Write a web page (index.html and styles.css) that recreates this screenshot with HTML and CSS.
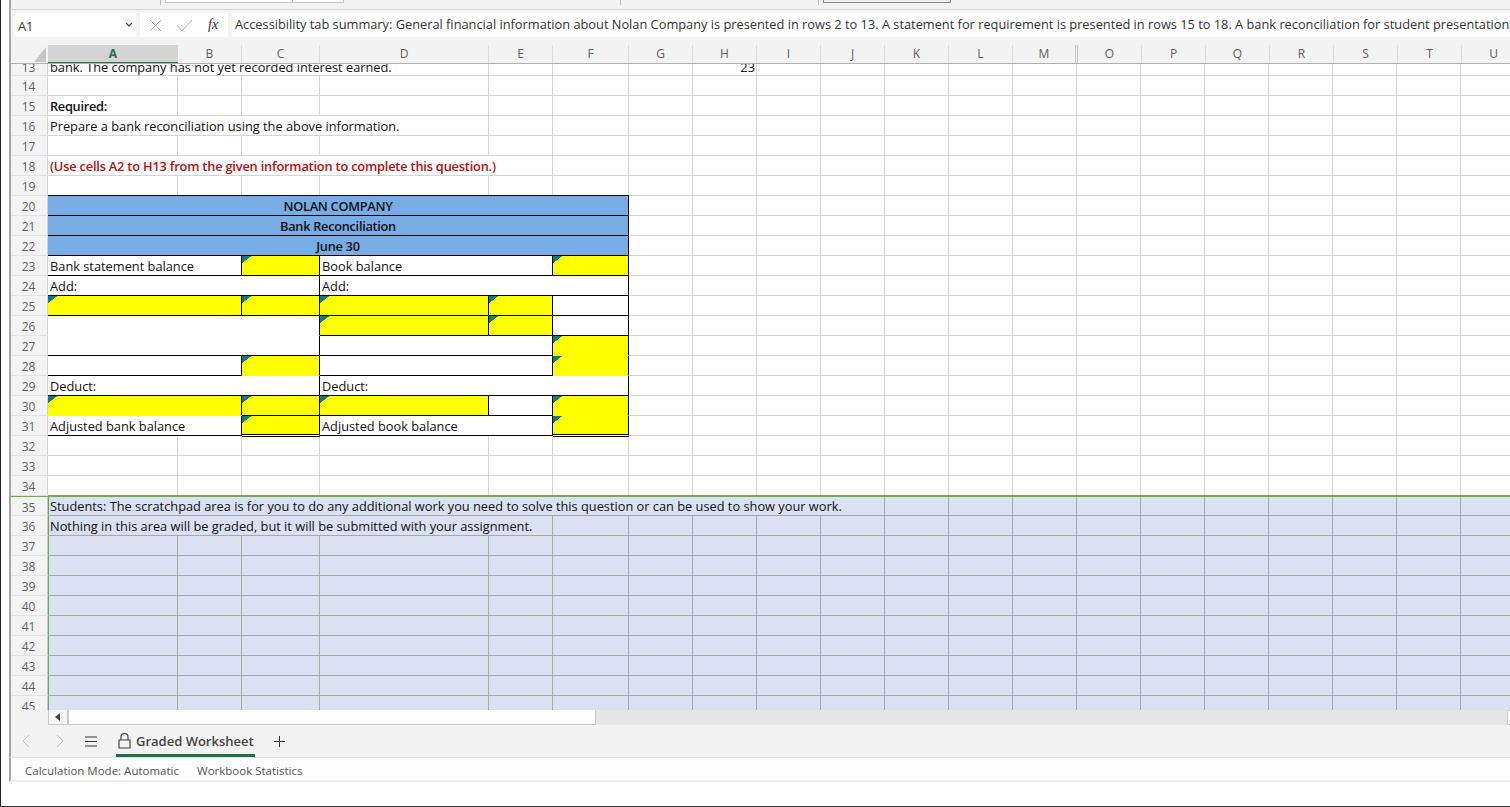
FILE: index.html
```html
<!DOCTYPE html>
<html lang="en">
<head>
<meta charset="utf-8">
<title>Graded Worksheet</title>
<link rel="stylesheet" href="styles.css">
</head>
<body>
<div class="app">
  <div class="topstrip">
    <div class="tick t1"></div>
    <div class="stripbox b1"><span class="s1"></span></div>
    <div class="tick t2"></div>
    <div class="tick t3"></div>
    <div class="stripbox b3"></div>
  </div>
  <div class="formula">
    <div class="namebox"><span class="nametext">A1</span><svg width="8" height="6" viewBox="0 0 8 6"><path d="M1 1l3 3 3-3" fill="none" stroke="#444" stroke-width="1.2"/></svg></div>
    <div class="fbtns">
      <svg width="13" height="13" viewBox="0 0 13 13"><path d="M1 1l11 11M12 1L1 12" fill="none" stroke="#aaa" stroke-width="1"/></svg>
      <svg width="17" height="13" viewBox="0 0 17 13"><path d="M1 6l5 6L16 1" fill="none" stroke="#b4b4b4" stroke-width="1"/></svg>
      <span class="fx">fx</span>
    </div>
    <div class="finput">Accessibility tab summary: General financial information about Nolan Company is presented in rows 2 to 13. A statement for requirement is presented in rows 15 to 18. A bank reconciliation for student presentation is presented in rows 20 to 31.</div>
  </div>
  <div class="colhead">
    <div class="corner"><span class="tri"></span></div>
    <div class="ch sel">A</div><div class="ch">B</div><div class="ch">C</div><div class="ch">D</div><div class="ch">E</div><div class="ch">F</div>
    <div class="ch">G</div><div class="ch">H</div><div class="ch">I</div><div class="ch">J</div><div class="ch">K</div><div class="ch">L</div><div class="ch mm">M</div><div class="ch">O</div><div class="ch">P</div><div class="ch">Q</div><div class="ch">R</div><div class="ch">S</div><div class="ch">T</div><div class="ch">U</div>
  </div>
  <div class="sheet">
    <div class="row first"><div class="num">13</div><div class="c s-ad plain">bank. The company has not yet recorded interest earned.</div><div class="c-g"><span class="h13">23</span></div></div>
    <div class="row"><div class="num">14</div><div class="tail"></div></div>
    <div class="row"><div class="num">15</div><div class="c s-a plain bold">Required:</div><div class="tail"></div></div>
    <div class="row"><div class="num">16</div><div class="c s-ad plain">Prepare a bank reconciliation using the above information.</div><div class="tail"></div></div>
    <div class="row"><div class="num">17</div><div class="tail"></div></div>
    <div class="row"><div class="num">18</div><div class="c s-ae plain bold red">(Use cells A2 to H13 from the given information to complete this question.)</div><div class="tail"></div></div>
    <div class="row"><div class="num">19</div><div class="tail"></div></div>
    <div class="row"><div class="num">20</div><div class="c s-af blue bold center t">NOLAN COMPANY</div><div class="tail"></div></div>
    <div class="row"><div class="num">21</div><div class="c s-af blue bold center">Bank Reconciliation</div><div class="tail"></div></div>
    <div class="row"><div class="num">22</div><div class="c s-af blue bold center">June 30</div><div class="tail"></div></div>
    <div class="row"><div class="num">23</div><div class="c s-ab w">Bank statement balance</div><div class="c s-c y"></div><div class="c s-de w">Book balance</div><div class="c s-f y"></div><div class="tail"></div></div>
    <div class="row"><div class="num">24</div><div class="c s-ac w">Add:</div><div class="c s-df w">Add:</div><div class="tail"></div></div>
    <div class="row"><div class="num">25</div><div class="c s-ab y"></div><div class="c s-c y"></div><div class="c s-d y"></div><div class="c s-e y"></div><div class="c s-f w"></div><div class="tail"></div></div>
    <div class="row"><div class="num">26</div><div class="c s-ac w nb"></div><div class="c s-d y"></div><div class="c s-e y"></div><div class="c s-f w"></div><div class="tail"></div></div>
    <div class="row"><div class="num">27</div><div class="c s-ac w"></div><div class="c s-de w"></div><div class="c s-f y open"></div><div class="tail"></div></div>
    <div class="row"><div class="num">28</div><div class="c s-ab w"></div><div class="c s-c y open"></div><div class="c s-de w"></div><div class="c s-f y open"></div><div class="tail"></div></div>
    <div class="row"><div class="num">29</div><div class="c s-ac w">Deduct:</div><div class="c s-df w">Deduct:</div><div class="tail"></div></div>
    <div class="row"><div class="num">30</div><div class="c s-ab y open"></div><div class="c s-c y"></div><div class="c s-d y"></div><div class="c s-e w"></div><div class="c s-f y open"></div><div class="tail"></div></div>
    <div class="row"><div class="num">31</div><div class="c s-ab w">Adjusted bank balance</div><div class="c s-c y dbl"></div><div class="c s-de w">Adjusted book balance</div><div class="c s-f y dbl"></div><div class="tail"></div></div>
    <div class="row"><div class="num">32</div><div class="tail"></div></div>
    <div class="row"><div class="num">33</div><div class="tail"></div></div>
    <div class="row r34"><div class="num">34</div><div class="tail"></div></div>
    <div class="row scratch r35"><div class="num">35</div><div class="c s-ah note">Students: The scratchpad area is for you to do any additional work you need to solve this question or can be used to show your work.</div><div class="tail"></div></div>
    <div class="row scratch"><div class="num">36</div><div class="c s-ae note">Nothing in this area will be graded, but it will be submitted with your assignment.</div><div class="tail"></div></div>
    <div class="row scratch"><div class="num">37</div><div class="tail"></div></div>
    <div class="row scratch"><div class="num">38</div><div class="tail"></div></div>
    <div class="row scratch"><div class="num">39</div><div class="tail"></div></div>
    <div class="row scratch"><div class="num">40</div><div class="tail"></div></div>
    <div class="row scratch"><div class="num">41</div><div class="tail"></div></div>
    <div class="row scratch"><div class="num">42</div><div class="tail"></div></div>
    <div class="row scratch"><div class="num">43</div><div class="tail"></div></div>
    <div class="row scratch"><div class="num">44</div><div class="tail"></div></div>
    <div class="row scratch"><div class="num">45</div><div class="tail"></div></div>
  </div>
  <div class="hscroll">
    <div class="hs-left"></div>
    <div class="hs-btn"><svg width="6" height="8" viewBox="0 0 6 8"><path d="M5 0v8L0 4z" fill="#444"/></svg></div>
    <div class="hs-thumb"></div>
    <div class="hs-track"></div>
    <div class="hs-end"></div>
  </div>
  <div class="tabs">
    <svg class="nav" width="10" height="14" viewBox="0 0 10 14"><path d="M8 1L2 7l6 6" fill="none" stroke="#c4c4c4" stroke-width="1"/></svg>
    <svg class="nav n2" width="10" height="14" viewBox="0 0 10 14"><path d="M2 1l6 6-6 6" fill="none" stroke="#bdbdbd" stroke-width="1"/></svg>
    <svg class="menu" width="12" height="11" viewBox="0 0 12 11"><path d="M0 1h12M0 5.500h12M0 10h12" fill="none" stroke="#333" stroke-width="1"/></svg>
    <div class="tab">
      <svg width="13" height="16" viewBox="0 0 13 16"><path d="M1 7V15H12V7ZM3 7V4a3.500 3.500 0 0 1 7 0V7" fill="none" stroke="#444" stroke-width="1.200"/></svg>
      <span>Graded Worksheet</span>
    </div>
    <svg class="plus" width="13" height="13" viewBox="0 0 13 13"><path d="M6.500 1v11M1 6.500h11" fill="none" stroke="#333" stroke-width="1"/></svg>
  </div>
  <div class="status"><span>Calculation Mode: Automatic</span><span>Workbook Statistics</span></div>
</div>
</body>
</html>
```
FILE: styles.css
```css
* { box-sizing: border-box; }
html, body { margin: 0; padding: 0; background: #fff; }
body { font-family: "Open Sans", "Liberation Sans", sans-serif; overflow: hidden; }
.app { width: 1510px; height: 807px; border-left: 1px solid #222; border-bottom: 1px solid #333; padding-left: 8px; overflow: hidden; }
.topstrip { height: 10px; background: #f3f2f1; border-bottom: 1px solid #d2d2d2; border-left: 2px solid #a6a6a6; display: flex; align-items: flex-start; overflow: hidden; }
.stripbox { height: 3px; background: #fff; border: 1px solid #c8c8c8; border-top: 0; flex: none; }
.tick { width: 1px; height: 5px; background: #bbb; flex: none; }
.t1 { margin-left: 149px; }
.b1 { margin-left: 4px; width: 179px; height: 3px; display: flex; }
.s1 { width: 127px; border-right: 1px solid #c8c8c8; }
.t2 { margin-left: 276px; }
.t3 { margin-left: 197px; }
.b3 { margin-left: 4px; width: 128px; border-color: #888; background: transparent; }
.formula { height: 35px; background: #f3f3f3; display: flex; padding: 3px 0 8px 4px; gap: 4px; border-left: 2px solid #a6a6a6; }
.namebox { width: 121px; background: #fff; display: flex; align-items: center; justify-content: space-between; padding: 0 3px; font-size: 12.800px; color: #333; }
.nametext { padding-top: 2px; }
.fbtns { width: 88px; background: #fff; display: flex; align-items: center; gap: 14px; padding-left: 9px; }
.fx { font: italic 14px "Liberation Serif", serif; color: #333; margin-left: 1px; }
.finput { flex: 1; background: #fff; font-size: 12.800px; line-height: 22px; padding: 0 3px; white-space: nowrap; overflow: hidden; color: #333; }
.colhead { height: 19px; background: #f3f3f3; display: flex; border-bottom: 1px solid #b0b0b0; border-left: 2px solid #a6a6a6; font-size: 12px; color: #5f5f5f; overflow: hidden; }
.corner { width: 37px; flex: none; position: relative; }
.tri { position: absolute; right: 2px; bottom: 1px; border-style: solid; border-width: 0 0 15px 12px; border-color: transparent transparent #c6c6c6 transparent; }
.ch { width: 64px; flex: none; text-align: center; line-height: 18px; border-right: 1px solid #dcdcdc; }
.ch:nth-child(2) { width: 130px; }
.ch:nth-child(4) { width: 78px; }
.ch:nth-child(5) { width: 169px; }
.ch:nth-child(7) { width: 76px; }
.ch.sel { background: #d4d4d4; color: #217346; font-weight: 700; height: 19px; border-right: 0; border-bottom: 2px solid #217346; }
.ch.mm { border-right: 3px double #c8c8c8; width: 65px; }
.sheet { height: 646px; overflow: hidden; border-left: 2px solid #a6a6a6; }
.row { --line: #d4d4d4; height: 20px; display: grid; grid-template-columns: 37px 130px 64px 78px 169px 64px 76px 1fr; grid-template-rows: minmax(0, 1fr); border-bottom: 1px solid var(--line); font-size: 12.800px; color: #111;
  background:
    linear-gradient(var(--line), var(--line)) 166px 0 / 1px 100% no-repeat,
    linear-gradient(var(--line), var(--line)) 230px 0 / 1px 100% no-repeat,
    linear-gradient(var(--line), var(--line)) 308px 0 / 1px 100% no-repeat,
    linear-gradient(var(--line), var(--line)) 477px 0 / 1px 100% no-repeat,
    linear-gradient(var(--line), var(--line)) 541px 0 / 1px 100% no-repeat,
    linear-gradient(var(--line), var(--line)) 617px 0 / 1px 100% no-repeat; }
.row.first { height: 12px; }
.r34 { height: 21px; border-bottom: 2px solid #70ad47; }
.r35 { height: 19px; }
.num { grid-column: 1; background: #f3f3f3; border-right: 1px solid #d4d4d4; box-shadow: 0 1px #e1e1e1; color: #5f5f5f; font-size: 12px; text-align: center; line-height: 22px; padding-right: 1px; }
.first .num { line-height: 8px; }
.r35 .num { line-height: 21px; }
.tail { grid-column: 8; grid-row: 1; background: repeating-linear-gradient(90deg, transparent 0 63px, var(--line) 63px 64px); }
.scratch { --line: #a8a8a8; background-color: #d9e1f2; }
.scratch .num { box-shadow: 1px 0 #70ad47, 0 1px #e1e1e1; border-right-color: #c8c8c8; }
.c { grid-row: 1; padding: 0 2px; line-height: 21px; white-space: nowrap; overflow: hidden; position: relative; }
.c-g { grid-column: 8; grid-row: 1; display: flex; overflow: hidden; background: repeating-linear-gradient(90deg, transparent 0 63px, var(--line) 63px 64px); }
.h13 { margin-left: 64px; width: 63px; padding-right: 1px; text-align: right; line-height: 6px; }
.first .c { line-height: 6px; }
.s-a { grid-column: 2; }
.s-ab { grid-column: 2 / 4; }
.s-ac { grid-column: 2 / 5; }
.s-ad { grid-column: 2 / 6; }
.s-ae { grid-column: 2 / 7; }
.s-af { grid-column: 2 / 8; }
.s-ah { grid-column: 2 / 9; width: 836px; }
.s-c { grid-column: 4; }
.s-d { grid-column: 5; }
.s-e { grid-column: 6; }
.s-f { grid-column: 7; }
.s-de { grid-column: 5 / 7; }
.s-df { grid-column: 5 / 8; }
.plain { background: #fff; margin-right: 1px; }
.bold { font-weight: 600; letter-spacing: -0.300px; }
.red { color: #b30f0f; letter-spacing: -0.190px; }
.center { text-align: center; }
.blue, .w, .y { border-right: 1px solid #000; border-bottom: 1px solid #000; margin-bottom: -1px; }
.blue { background: #78ace4; }
.blue.t { box-shadow: 0 -1px #000; }
.w { background: #fff; }
.y { background: linear-gradient(to bottom right, #0a7a8c 50%, transparent 53%) 0 0 / 9px 7px no-repeat, #ff0; }
.nb { border-bottom-color: #fff; }
.open { border-bottom-color: #ff0; }
.y.dbl { border-bottom-color: #fff; overflow: visible; box-shadow: inset 0 -1px #000, 0 1px #000; }
.note { background: #d9e1f2; margin-right: 1px; border-left: 1px solid #70ad47; padding-left: 1px; }
.r35 .c { line-height: 18px; }
.hscroll { height: 15px; display: flex; background: #f3f3f3; border-left: 2px solid #a6a6a6; }
.hs-left { width: 37px; flex: none; }
.hs-btn { width: 21px; flex: none; background: #f6f6f6; border: 1px solid #c8c8c8; border-top: 0; border-right: 2px solid #c8c8c8; display: flex; align-items: center; justify-content: center; }
.hs-thumb { width: 527px; flex: none; background: #fff; border: 1px solid #c8c8c8; border-left: 0; border-top: 0; }
.hs-track { flex: 1; background: #e6e6e6; }
.hs-end { width: 3px; background: #fff; border: 1px solid #ccc; border-right: 0; }
.tabs { height: 33px; background: #f3f3f3; border-left: 2px solid #a6a6a6; border-bottom: 1px solid #e1e1e1; display: flex; align-items: center; }
.nav { margin-left: 10px; flex: none; }
.nav.n2 { margin-left: 24px; }
.menu { margin-left: 20px; flex: none; }
.tab { margin-left: 19px; width: 139px; height: 32px; flex: none; display: flex; align-items: center; gap: 5px; padding: 3px 0 0 2px; border-bottom: 3px solid #1e7145; font-size: 13px; font-weight: 600; color: #444; white-space: nowrap; }
.plus { margin-left: 18px; flex: none; }
.status { height: 24px; background: #fdfdfd; border-left: 2px solid #a6a6a6; border-bottom: 2px solid #eee; display: flex; gap: 18px; padding-left: 14px; font-size: 11.500px; line-height: 25px; color: #555; }
```
